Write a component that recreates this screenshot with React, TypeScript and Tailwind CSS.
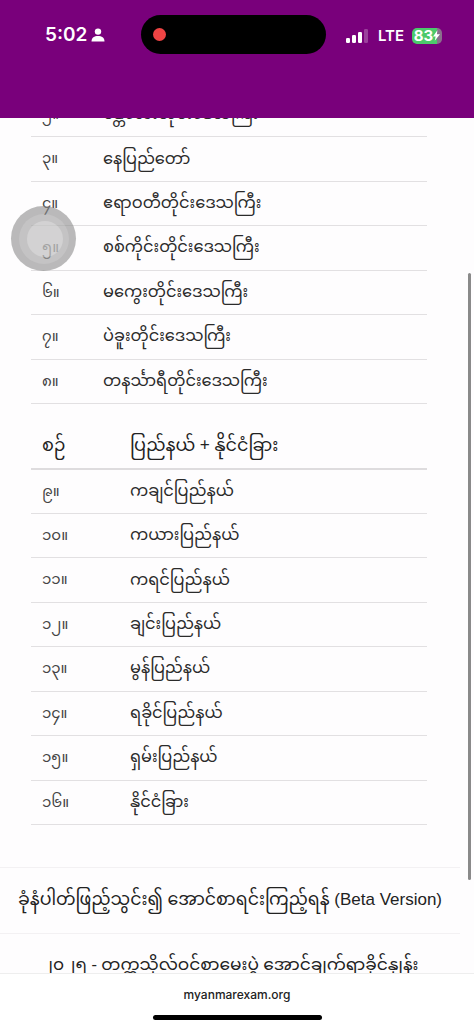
const TOP_ROWS = [
  ["၂။", "မန္တလေးတိုင်းဒေသကြီး"],
  ["၃။", "နေပြည်တော်"],
  ["၄။", "ဧရာဝတီတိုင်းဒေသကြီး"],
  ["၅။", "စစ်ကိုင်းတိုင်းဒေသကြီး"],
  ["၆။", "မကွေးတိုင်းဒေသကြီး"],
  ["၇။", "ပဲခူးတိုင်းဒေသကြီး"],
  ["၈။", "တနင်္သာရီတိုင်းဒေသကြီး"],
];

const STATE_ROWS = [
  ["၉။", "ကချင်ပြည်နယ်"],
  ["၁၀။", "ကယားပြည်နယ်"],
  ["၁၁။", "ကရင်ပြည်နယ်"],
  ["၁၂။", "ချင်းပြည်နယ်"],
  ["၁၃။", "မွန်ပြည်နယ်"],
  ["၁၄။", "ရခိုင်ပြည်နယ်"],
  ["၁၅။", "ရှမ်းပြည်နယ်"],
  ["၁၆။", "နိုင်ငံခြား"],
];

function Row({ no, name, numWidth }: { no: string; name: string; numWidth: string }) {
  return (
    <div className="flex h-[44.45px] items-center border-b border-[#e2e0e2] pl-[11px] pt-[3px] text-[16.2px] text-[#2b2b2b]">
      <span className={`${numWidth} shrink-0 text-[15px] text-[#444]`}>{no}</span>
      <span>{name}</span>
    </div>
  );
}

function StatusBar() {
  return (
    <div className="flex h-[118px] shrink-0 items-start bg-[#79007b] pt-[15px] font-['Inter',sans-serif]">
      <div className="flex h-[39px] w-[141px] items-center gap-[4px] pl-[45px] text-white">
        <span className="text-[19px] font-semibold leading-none">5:02</span>
        <svg viewBox="0 0 14 14" className="h-[14px] w-[14px]" fill="white">
          <circle cx="7" cy="3.6" r="3.2" />
          <path d="M0.5 13.5c0-3.6 2.8-5.4 6.500-5.400s6.500 1.800 6.500 5.400z" />
        </svg>
      </div>
      <div className="flex h-[39px] w-[185px] items-center rounded-full bg-black pl-[12px]">
        <span className="h-[13px] w-[13px] rounded-full bg-[#ef4444]" />
      </div>
      <div className="ml-[20px] flex h-[39px] items-center pt-[2px] text-white">
        <svg viewBox="0 0 22 14" className="h-[14px] w-[22px]" fill="white">
          <rect x="0" y="9" width="4" height="5" rx="1.2" />
          <rect x="6" y="6" width="4" height="8" rx="1.2" />
          <rect x="12" y="3" width="4" height="11" rx="1.2" />
          <rect x="18" y="0" width="4" height="14" rx="1.2" fillOpacity="0.25" />
        </svg>
        <span className="ml-[10px] text-[15px] font-semibold leading-none">LTE</span>
        <span className="ml-[8px] flex h-[16px] w-[30px] items-center justify-center rounded-[5px] bg-[linear-gradient(to_right,#4cc96b_83%,#8a6f8c_83%)] text-[15px] font-bold leading-none">
          83
          <svg viewBox="0 0 8 12" className="h-[11px] w-[7px]" fill="white">
            <path d="M5 0 0 7h3l-1 5 6-7.500H4.500z" />
          </svg>
        </span>
      </div>
    </div>
  );
}

export default function App() {
  return (
    <div className="relative flex h-[1029px] w-[474px] flex-col overflow-hidden bg-[#fefdfe] font-['Noto_Sans_Myanmar','Noto_Sans','Liberation_Sans',sans-serif]">
      <StatusBar />

      <div className="min-h-0 flex-1 overflow-hidden">
        <div className="mt-[-25px] pl-[31px] pr-[47px]">
          {TOP_ROWS.map(([no, name]) => (
            <Row key={no} no={no} name={name} numWidth="w-[61px]" />
          ))}

          <div className="mt-[22px] flex h-[43.5px] items-center border-b-2 border-[#dedcde] pl-[11px] text-[17.6px] text-[#222]">
            <span className="w-[88px] shrink-0">စဉ်</span>
            <span>ပြည်နယ် + နိုင်ငံခြား</span>
          </div>

          {STATE_ROWS.map(([no, name]) => (
            <Row key={no} no={no} name={name} numWidth="w-[88px]" />
          ))}
        </div>

        <div className="mt-[42px] mr-[14px] whitespace-nowrap border-y border-[#f3f1f3] py-[19px] text-center text-[17.4px] text-[#222]">
          ခုံနံပါတ်ဖြည့်သွင်း၍ အောင်စာရင်းကြည့်ရန် <span className="font-['Liberation_Sans',sans-serif] text-[17px]">(Beta Version)</span>
        </div>
        <div className="mt-[20px] mr-[14px] whitespace-nowrap text-center text-[17px] text-[#222]">
          ၂၀၂၅ - တက္ကသိုလ်ဝင်စာမေးပွဲ အောင်ချက်ရာခိုင်နှုန်း
        </div>
      </div>

      {/* browser chrome + overlays */}
      <div className="absolute bottom-0 left-0 h-[56px] w-full border-t border-[#eeeeee] bg-white">
        <p className="mt-[12px] text-center font-['Inter',sans-serif] text-[12px] font-medium text-[#222]">
          myanmarexam.org
        </p>
        <div className="absolute bottom-[9px] left-[153px] h-[5px] w-[169px] rounded-full bg-black" />
      </div>

      <div className="absolute left-[468px] top-[273px] h-[607px] w-[3px] rounded-full bg-[#8a8a8a]" />

      <div className="absolute left-[11px] top-[206px] flex h-[65px] w-[65px] items-center justify-center rounded-full bg-[#8c8c8c]/60">
        <div className="flex h-[50px] w-[50px] items-center justify-center rounded-full bg-white/15">
          <div className="ml-[3px] h-[36px] w-[36px] rounded-full bg-white/25" />
        </div>
      </div>
    </div>
  );
}
